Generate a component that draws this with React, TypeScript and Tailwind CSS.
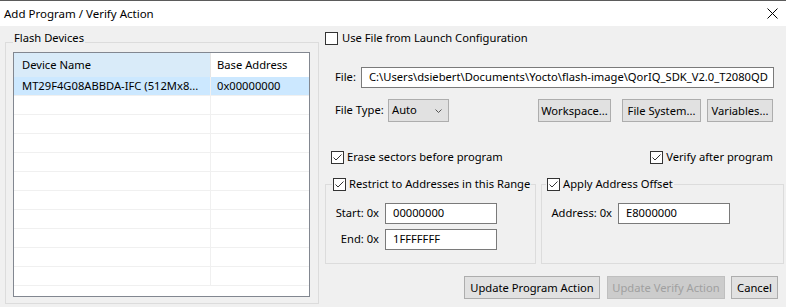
import React from 'react';

const font = { fontFamily: '"Noto Sans", "Open Sans", sans-serif' };

const Check: React.FC<{ checked?: boolean }> = ({ checked }) => (
    <span className="w-[13px] h-[13px] shrink-0 border border-[#333333] bg-white flex items-center justify-center">
        {checked && (
            <svg width="11" height="11" viewBox="0 0 11 11">
                <path d="M1.5 5.5 L4 8 L9.5 2.5" fill="none" stroke="#333333" strokeWidth="1" />
            </svg>
        )}
    </span>
);

const Btn: React.FC<{ w: string; disabled?: boolean; children: React.ReactNode }> = ({ w, disabled, children }) => (
    <button
        className={
            disabled
                ? `${w} h-[23px] bg-[#cccccc] border border-[#bfbfbf] text-[#a0a0a0] text-[11.2px] leading-none whitespace-nowrap`
                : `${w} h-[23px] bg-[#e1e1e1] border border-[#adadad] text-black text-[11.2px] leading-none whitespace-nowrap`
        }
    >
        {children}
    </button>
);

const rows = Array.from({ length: 10 });

export default function App() {
    return (
        <div className="w-[786px] h-[307px] bg-[#f0f0f0] text-[11.2px] text-black overflow-hidden whitespace-nowrap" style={font}>
            {/* Title bar */}
            <div className="h-[26px] bg-white border-t border-[#5b5b5b] flex items-center justify-between pl-[4px] pr-[8px]">
                <span className="leading-none text-[11.5px]">Add Program / Verify Action</span>
                <svg width="11" height="11" viewBox="0 0 11 11">
                    <path d="M0.5 0.5 L10.5 10.5 M10.5 0.5 L0.5 10.5" stroke="#000" strokeWidth="1" />
                </svg>
            </div>

            <div className="flex">
                {/* Flash Devices */}
                <fieldset className="ml-[5px] mt-[4px] w-[314px] h-[274px] border border-[#dcdcdc] pl-[7px]">
                    <legend className="px-[1px] leading-[16px] pb-[8px]">Flash Devices</legend>
                    <div className="-mt-[2px] w-[297px] h-[245px] border border-[#828790] bg-white overflow-hidden">
                        <div className="flex h-[24px]">
                            <div className="w-[197px] bg-[#d9ebf9] pl-[8px] flex items-center border-r border-[#e5e5e5]">Device Name</div>
                            <div className="flex-1 pl-[6px] flex items-center">Base Address</div>
                        </div>
                        <div className="flex h-[19px] bg-[#cce8ff] border-b border-[#f0f0f0]">
                            <div className="w-[197px] pl-[8px] flex items-center border-r border-[#f0f0f0]">MT29F4G08ABBDA-IFC (512Mx8...</div>
                            <div className="flex-1 pl-[6px] flex items-center">0x00000000</div>
                        </div>
                        {rows.map((_, i) => (
                            <div key={i} className="flex h-[19px] border-b border-[#f0f0f0]">
                                <div className="w-[197px] border-r border-[#f0f0f0]" />
                                <div className="flex-1" />
                            </div>
                        ))}
                    </div>
                </fieldset>

                {/* Right panel */}
                <div className="ml-[6px] w-[459px] flex flex-col">
                    <label className="mt-[4px] h-[16px] flex items-center gap-[4px]">
                        <Check />
                        <span>Use File from Launch Configuration</span>
                    </label>

                    <div className="mt-[21px] pl-[10px] pr-[10px] flex items-center">
                        <span className="w-[26px]">File:</span>
                        <div className="flex-1 h-[21px] bg-white border border-[#7a7a7a] pl-[7px] flex items-center overflow-hidden">
                            C:\Users\dsiebert\Documents\Yocto\flash-image\QorIQ_SDK_V2.0_T2080QD
                        </div>
                    </div>

                    <div className="mt-[11px] pl-[10px] pr-[11px] flex items-center">
                        <span className="w-[53px]">File Type:</span>
                        <div className="w-[61px] h-[23px] bg-[#e1e1e1] border border-[#adadad] flex items-center justify-between pl-[3px] pr-[6px]">
                            <span>Auto</span>
                            <svg width="7" height="4" viewBox="0 0 7 4">
                                <path d="M0.5 0.5 L3.5 3.5 L6.5 0.5" fill="none" stroke="#555" strokeWidth="1" />
                            </svg>
                        </div>
                        <div className="ml-auto flex">
                            <Btn w="w-[73px]">Workspace...</Btn>
                            <div className="ml-[11px]"><Btn w="w-[79px]">File System...</Btn></div>
                            <div className="ml-[6px]"><Btn w="w-[66px]">Variables...</Btn></div>
                        </div>
                    </div>

                    <div className="mt-[27px] h-[16px] pl-[6px] pr-[11px] flex items-center">
                        <label className="flex items-center gap-[3px]">
                            <Check checked />
                            <span>Erase sectors before program</span>
                        </label>
                        <label className="ml-auto flex items-center gap-[3px]">
                            <Check checked />
                            <span>Verify after program</span>
                        </label>
                    </div>

                    <div className="mt-[11px] flex gap-[5px]">
                        <fieldset className="w-[211px] h-[88px] border border-[#dcdcdc] pl-[6px]">
                            <legend className="px-[1px] leading-[16px]">
                                <span className="flex items-center gap-[3px]">
                                    <Check checked />
                                    <span>Restrict to Addresses in this Range</span>
                                </span>
                            </legend>
                            <div className="mt-[11px] grid grid-cols-[47px_112px] gap-x-[6px] gap-y-[5px] items-center">
                                <span className="text-right">Start: 0x</span>
                                <div className="h-[21px] bg-white border border-[#7a7a7a] pl-[7px] flex items-center">00000000</div>
                                <span className="text-right">End: 0x</span>
                                <div className="h-[21px] bg-white border border-[#7a7a7a] pl-[7px] flex items-center">1FFFFFFF</div>
                            </div>
                        </fieldset>

                        <fieldset className="w-[243px] h-[88px] border border-[#dcdcdc] pl-[4px]">
                            <legend className="px-[1px] leading-[16px]">
                                <span className="flex items-center gap-[3px]">
                                    <Check checked />
                                    <span>Apply Address Offset</span>
                                </span>
                            </legend>
                            <div className="mt-[11px] grid grid-cols-[66px_112px] gap-x-[6px] items-center">
                                <span className="text-right">Address: 0x</span>
                                <div className="h-[21px] bg-white border border-[#7a7a7a] pl-[7px] flex items-center">E8000000</div>
                            </div>
                        </fieldset>
                    </div>

                    <div className="mt-[12px] pr-[6px] flex justify-end">
                        <Btn w="w-[136px]">Update Program Action</Btn>
                        <div className="ml-[7px]"><Btn w="w-[118px]" disabled>Update Verify Action</Btn></div>
                        <div className="ml-[6px]"><Btn w="w-[47px]">Cancel</Btn></div>
                    </div>
                </div>
            </div>
        </div>
    );
}
